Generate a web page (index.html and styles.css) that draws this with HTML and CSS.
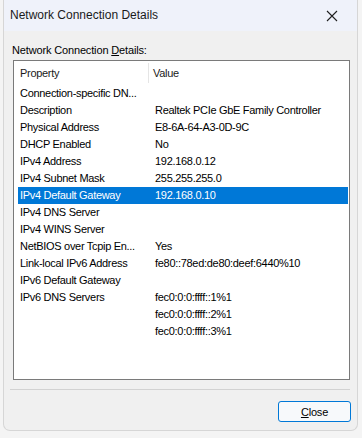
FILE: index.html
```html
<!DOCTYPE html>
<html>
<head>
<meta charset="utf-8">
<link rel="stylesheet" href="styles.css">
</head>
<body>
<div class="window">
  <div class="titlebar">
    <span class="title">Network Connection Details</span>
    <span class="close-x">
      <svg width="12" height="12" viewBox="0 0 12 12"><path d="M1 1 L11 11 M11 1 L1 11" stroke="#1f1f1f" stroke-width="1.1" fill="none"/></svg>
    </span>
  </div>
  <div class="content">
    <div class="label">Network Connection <u>D</u>etails:</div>
    <div class="listbox">
      <div class="header">
        <div class="hcell">Property</div>
        <div class="hcell hval">Value</div>
      </div>
      <div class="rows">
        <div class="row"><span class="prop">Connection-specific DN...</span><span class="val"></span></div>
        <div class="row"><span class="prop">Description</span><span class="val">Realtek PCIe GbE Family Controller</span></div>
        <div class="row"><span class="prop">Physical Address</span><span class="val">E8-6A-64-A3-0D-9C</span></div>
        <div class="row"><span class="prop">DHCP Enabled</span><span class="val">No</span></div>
        <div class="row"><span class="prop">IPv4 Address</span><span class="val">192.168.0.12</span></div>
        <div class="row"><span class="prop">IPv4 Subnet Mask</span><span class="val">255.255.255.0</span></div>
        <div class="row selected"><span class="prop">IPv4 Default Gateway</span><span class="val">192.168.0.10</span></div>
        <div class="row"><span class="prop">IPv4 DNS Server</span><span class="val"></span></div>
        <div class="row"><span class="prop">IPv4 WINS Server</span><span class="val"></span></div>
        <div class="row"><span class="prop">NetBIOS over Tcpip En...</span><span class="val">Yes</span></div>
        <div class="row"><span class="prop">Link-local IPv6 Address</span><span class="val">fe80::78ed:de80:deef:6440%10</span></div>
        <div class="row"><span class="prop">IPv6 Default Gateway</span><span class="val"></span></div>
        <div class="row"><span class="prop">IPv6 DNS Servers</span><span class="val">fec0:0:0:ffff::1%1</span></div>
        <div class="row"><span class="prop"></span><span class="val">fec0:0:0:ffff::2%1</span></div>
        <div class="row"><span class="prop"></span><span class="val">fec0:0:0:ffff::3%1</span></div>
      </div>
    </div>
    <div class="sep"></div>
    <div class="footer">
      <button class="btn"><u>C</u>lose</button>
    </div>
  </div>
</div>
</body>
</html>
```

FILE: styles.css
```css
html, body {
  margin: 0;
  padding: 0;
}
body {
  width: 362px;
  height: 438px;
  background: #f4f4f4;
  overflow: hidden;
  font-family: "Liberation Sans", Arial, sans-serif;
  color: #000;
}
.window {
  margin-left: 3px;
  width: 353px;
  height: 430px;
  border: 1px solid #d6d6d6;
  border-top: none;
  border-radius: 0 0 7px 7px;
  background: #f0f0f0;
  display: flex;
  flex-direction: column;
}
.titlebar {
  height: 31px;
  background: #eff2fa;
  display: flex;
  align-items: center;
  justify-content: space-between;
  padding-left: 6px;
}
.title {
  font-size: 12px;
  line-height: 31px;
  color: #1a1a1a;
}
.close-x {
  width: 46px;
  height: 31px;
  display: flex;
  align-items: center;
  justify-content: center;
  margin-right: 2px;
}
.close-x svg {
  display: block;
}
.content {
  padding: 12px 7px 0 8px;
  display: flex;
  flex-direction: column;
}
.label {
  font-size: 11px;
  line-height: 14px;
  letter-spacing: -0.15px;
  color: #000;
}
.listbox {
  margin-top: 3px;
  margin-left: 1px;
  width: 335px;
  height: 318px;
  border: 1px solid #7a7a7a;
  background: #fff;
  font-size: 11px;
  letter-spacing: -0.3px;
}
.header {
  height: 24px;
  display: grid;
  grid-template-columns: 134px 1fr;
  align-items: center;
}
.hcell {
  padding-left: 6px;
  line-height: 24px;
  color: #1a1a1a;
}
.hval {
  border-left: 1px solid #e5e5e5;
  padding-left: 4px;
  height: 20px;
  line-height: 20px;
}
.rows {
  margin-left: 4px;
  margin-right: 1px;
}
.row {
  height: 17px;
  display: grid;
  grid-template-columns: 130px 1fr;
  align-items: center;
  line-height: 17px;
  white-space: nowrap;
}
.prop {
  padding-left: 2px;
  overflow: hidden;
}
.val {
  padding-left: 7px;
}
.row.selected {
  background: #0078d7;
  color: #fff;
}
.sep {
  margin-top: 9px;
  margin-left: -2px;
  width: 340px;
  height: 1px;
  background: #d2d2d2;
}
.footer {
  display: flex;
  justify-content: flex-end;
  padding-top: 11px;
}
.btn {
  width: 73px;
  height: 21px;
  margin-right: -1px;
  border: 1px solid #0078d7;
  border-radius: 3px;
  background: #f7f9fb;
  font-family: "Liberation Sans", Arial, sans-serif;
  font-size: 11px;
  letter-spacing: -0.2px;
  color: #000;
  padding: 0;
}
```
